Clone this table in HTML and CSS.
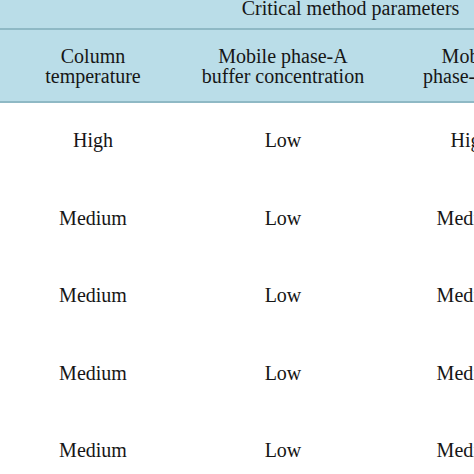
FILE: index.html
```html
<!DOCTYPE html>
<html lang="en">
<head>
<meta charset="utf-8">
<title>Critical method parameters</title>
<link rel="stylesheet" href="styles.css">
</head>
<body>
<div class="table">
  <div class="head">
    <div class="row-span">
      <div class="span-cell">Critical method parameters</div>
    </div>
    <div class="row-cols">
      <div class="cell">Column<br>temperature</div>
      <div class="cell">Mobile phase-A<br>buffer concentration</div>
      <div class="cell">Mobile<br>phase-B pH</div>
    </div>
  </div>
  <div class="body">
    <div class="row"><div class="cell">High</div><div class="cell">Low</div><div class="cell">High</div></div>
    <div class="row"><div class="cell">Medium</div><div class="cell">Low</div><div class="cell">Medium</div></div>
    <div class="row"><div class="cell">Medium</div><div class="cell">Low</div><div class="cell">Medium</div></div>
    <div class="row"><div class="cell">Medium</div><div class="cell">Low</div><div class="cell">Medium</div></div>
    <div class="row"><div class="cell">Medium</div><div class="cell">Low</div><div class="cell">Medium</div></div>
  </div>
</div>
</body>
</html>
```
FILE: styles.css
```css
html, body {
  margin: 0;
  padding: 0;
  background: #ffffff;
  overflow: hidden;
}
body {
  width: 474px;
  height: 474px;
  font-family: "Liberation Serif", "Times New Roman", serif;
  font-size: 20px;
  color: #161616;
}
.table {
  width: 561px;
}
.head {
  background: #badde8;
}
.row-span {
  display: grid;
  grid-template-columns: 186px 375px;
  height: 28px;
  border-bottom: 2px solid #8fb9c5;
}
.span-cell {
  grid-column: 2;
  text-align: center;
  line-height: 16px;
  padding-right: 46px;
}
.row-cols {
  display: grid;
  grid-template-columns: 186px 194px 181px;
  height: 71px;
  border-bottom: 2px solid #8fb9c5;
  align-items: center;
}
.cell {
  text-align: center;
  line-height: 20px;
  white-space: nowrap;
}
.row {
  display: grid;
  grid-template-columns: 186px 194px 181px;
  height: 77.5px;
  box-sizing: border-box;
  padding-bottom: 3.5px;
  align-items: center;
}
```
